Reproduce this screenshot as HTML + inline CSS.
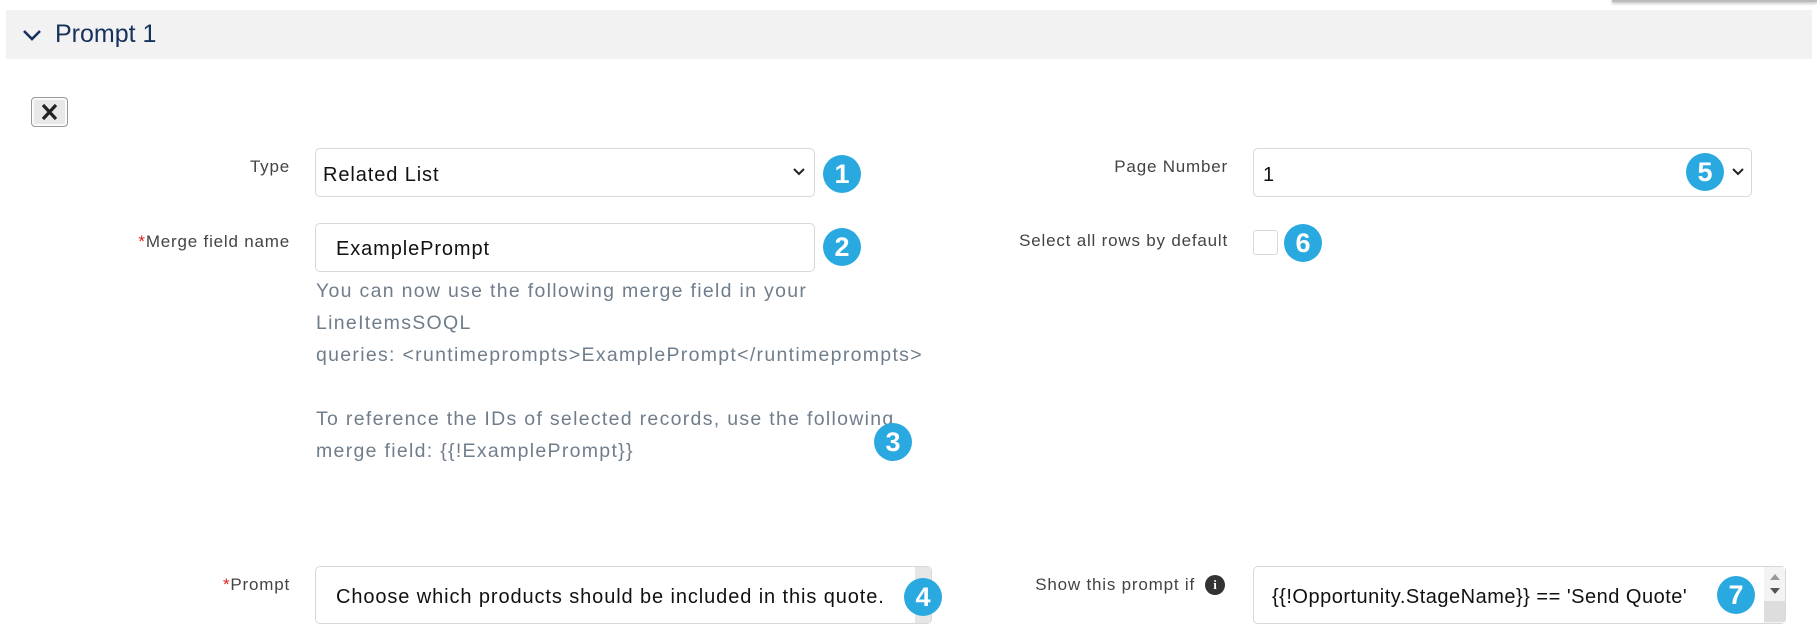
<!DOCTYPE html>
<html><head><meta charset="utf-8"><style>
body{margin:0;width:1817px;height:644px;background:#fff;position:relative;overflow:hidden;font-family:"Segoe UI","Liberation Sans",sans-serif}
.a{position:absolute}
.hdr{left:6px;top:10px;width:1806px;height:49px;background:#f2f2f2}
.ttl{left:55px;top:17px;font-size:25px;color:#16325c;line-height:34px}
.lbl{font-size:17px;color:#444;text-align:right;white-space:nowrap;line-height:22px;letter-spacing:0.8px}
.box{border:1px solid #d8d8d8;border-radius:5px;background:#fff;box-sizing:border-box}
.val{font-size:20px;color:#111;white-space:nowrap;line-height:26px;letter-spacing:0.9px}
.help{left:316px;font-size:19.5px;color:#707e8c;line-height:32px;white-space:nowrap;letter-spacing:1.3px}
.b{width:38px;height:38px;border-radius:50%;background:#2aa9e0;color:#fff;font-weight:bold;font-size:27px;line-height:38px;text-align:center;font-family:"Liberation Sans",sans-serif}
.req{color:#e02020}
</style></head><body>
<div class="a" style="left:1612px;top:0;width:205px;height:2px;background:#bbb;box-shadow:0 1px 3px #999"></div>
<div class="a hdr"></div>
<svg class="a" style="left:22px;top:28px" width="20" height="14" viewBox="0 0 20 14"><path d="M2 3 L10 11 L18 3" fill="none" stroke="#16325c" stroke-width="2.6"/></svg>
<div class="a ttl">Prompt 1</div>
<div class="a" style="left:31px;top:97px;width:37px;height:30px;border:1px solid #999;border-radius:4px;background:#e8e8e8;box-sizing:border-box;box-shadow:inset 0 0 0 2px #fafafa"></div>
<svg class="a" style="left:40px;top:103px" width="19" height="18" viewBox="0 0 19 18"><path d="M3 2 L16 16 M16 2 L3 16" stroke="#222" stroke-width="3.2"/></svg>

<div class="a lbl" style="right:1527px;top:156px">Type</div>
<div class="a box" style="left:315px;top:148px;width:500px;height:49px"></div>
<div class="a val" style="left:323px;top:162px">Related List</div>
<svg class="a" style="left:792px;top:167px" width="14" height="10" viewBox="0 0 14 10"><path d="M2 2 L7 7 L12 2" fill="none" stroke="#222" stroke-width="2"/></svg>
<div class="a b" style="left:823px;top:155px">1</div>

<div class="a lbl" style="right:1527px;top:231px"><span class="req">*</span>Merge field name</div>
<div class="a box" style="left:315px;top:223px;width:500px;height:49px"></div>
<div class="a val" style="left:336px;top:236px">ExamplePrompt</div>
<div class="a b" style="left:823px;top:228px">2</div>

<div class="a help" style="top:275px">You can now use the following merge field in your<br>LineItemsSOQL<br>queries: &lt;runtimeprompts&gt;ExamplePrompt&lt;/runtimeprompts&gt;<br>&nbsp;<br>To reference the IDs of selected records, use the following<br>merge field: {{!ExamplePrompt}}</div>
<div class="a b" style="left:874px;top:423px">3</div>

<div class="a lbl" style="right:1527px;top:574px"><span class="req">*</span>Prompt</div>
<div class="a box" style="left:315px;top:566px;width:617px;height:58px"></div>
<div class="a" style="left:915px;top:567px;width:16px;height:56px;background:#e6e6e6"></div>
<div class="a val" style="left:336px;top:584px">Choose which products should be included in this quote.</div>
<div class="a b" style="left:904px;top:578px">4</div>

<div class="a lbl" style="right:589px;top:156px">Page Number</div>
<div class="a box" style="left:1253px;top:148px;width:499px;height:49px"></div>
<div class="a val" style="left:1263px;top:162px">1</div>
<div class="a b" style="left:1686px;top:153px">5</div>
<svg class="a" style="left:1731px;top:167px" width="14" height="10" viewBox="0 0 14 10"><path d="M2 2 L7 7 L12 2" fill="none" stroke="#222" stroke-width="2"/></svg>

<div class="a lbl" style="right:589px;top:230px">Select all rows by default</div>
<div class="a box" style="left:1253px;top:230px;width:25px;height:25px;border-radius:3px"></div>
<div class="a b" style="left:1284px;top:224px">6</div>

<div class="a lbl" style="right:622px;top:574px">Show this prompt if</div>
<div class="a" style="left:1205px;top:575px;width:20px;height:20px;border-radius:50%;background:#333;color:#fff;font-size:13px;font-weight:bold;text-align:center;line-height:20px;font-family:'Liberation Serif',serif">i</div>
<div class="a box" style="left:1253px;top:566px;width:533px;height:58px"></div>
<div class="a" style="left:1764px;top:567px;width:21px;height:56px;background:#f3f3f3"></div>
<div class="a" style="left:1764px;top:601px;width:21px;height:21px;background:#ddd"></div>
<div class="a" style="left:1770px;top:574px;width:0;height:0;border-left:5px solid transparent;border-right:5px solid transparent;border-bottom:6px solid #999"></div>
<div class="a" style="left:1770px;top:588px;width:0;height:0;border-left:5px solid transparent;border-right:5px solid transparent;border-top:6px solid #555"></div>
<div class="a val" style="left:1272px;top:584px;letter-spacing:0.5px">{{!Opportunity.StageName}} == 'Send Quote'</div>
<div class="a b" style="left:1717px;top:576px">7</div>
</body></html>
